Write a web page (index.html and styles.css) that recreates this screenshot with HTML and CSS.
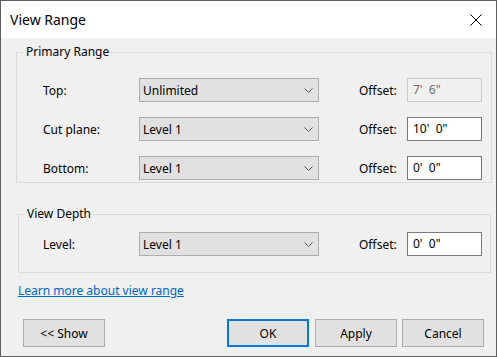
FILE: index.html
```html
<!DOCTYPE html>
<html lang="en">
<head>
  <meta charset="UTF-8">
  <title>View Range</title>
  <link rel="stylesheet" href="styles.css">
</head>
<body>

  <div class="window">
    <div class="titlebar">
      <span class="title">View Range</span>
      <svg class="close" width="12" height="12" viewBox="0 0 12 12">
        <path d="M0.5 0.5 L11.5 11.5 M11.5 0.5 L0.5 11.5" stroke="#000" stroke-width="1" fill="none"/>
      </svg>
    </div>

    <div class="content">
      <fieldset class="group primary">
        <legend>Primary Range</legend>

        <div class="row">
          <span class="field-label">Top:</span>
          <div class="combo"><span>Unlimited</span><svg class="chev" width="9" height="5" viewBox="0 0 9 5"><path d="M0.5 0.5 L4.5 4.5 L8.5 0.5" stroke="#555" fill="none"/></svg></div>
          <span class="offset-label">Offset:</span>
          <div class="offset disabled">7'  6"</div>
        </div>

        <div class="row">
          <span class="field-label">Cut plane:</span>
          <div class="combo"><span>Level 1</span><svg class="chev" width="9" height="5" viewBox="0 0 9 5"><path d="M0.5 0.5 L4.5 4.5 L8.5 0.5" stroke="#555" fill="none"/></svg></div>
          <span class="offset-label">Offset:</span>
          <div class="offset">10'  0"</div>
        </div>

        <div class="row">
          <span class="field-label">Bottom:</span>
          <div class="combo"><span>Level 1</span><svg class="chev" width="9" height="5" viewBox="0 0 9 5"><path d="M0.5 0.5 L4.5 4.5 L8.5 0.5" stroke="#555" fill="none"/></svg></div>
          <span class="offset-label">Offset:</span>
          <div class="offset">0'  0"</div>
        </div>
      </fieldset>

      <fieldset class="group depth">
        <legend>View Depth</legend>

        <div class="row">
          <span class="field-label">Level:</span>
          <div class="combo"><span>Level 1</span><svg class="chev" width="9" height="5" viewBox="0 0 9 5"><path d="M0.5 0.5 L4.5 4.5 L8.5 0.5" stroke="#555" fill="none"/></svg></div>
          <span class="offset-label">Offset:</span>
          <div class="offset">0'  0"</div>
        </div>
      </fieldset>

      <a class="learn" href="#">Learn more about view range</a>

      <div class="buttons">
        <button class="btn">&lt;&lt; Show</button>
        <div class="spacer"></div>
        <button class="btn default">OK</button>
        <button class="btn apply">Apply</button>
        <button class="btn">Cancel</button>
      </div>
    </div>
  </div>

</body>
</html>
```

FILE: styles.css
```css
html, body {
  margin: 0;
  padding: 0;
}
body {
  font-family: "Noto Sans", "Liberation Sans", sans-serif;
  font-size: 12px;
  color: #000;
  background: #f0f0f0;
}
.window {
  width: 497px;
  height: 357px;
  box-sizing: border-box;
  border: 1px solid #5f5f5f;
  background: #f0f0f0;
  display: flex;
  flex-direction: column;
}
.titlebar {
  height: 37px;
  background: #fff;
  display: flex;
  align-items: center;
  padding: 0 14px 0 9px;
}
.title {
  font-size: 14px;
  flex: 1;
}
.content {
  padding: 0 4px 0 15px;
}

/* group boxes */
.group {
  margin: 0;
  border: 1px solid #dcdcdc;
  min-width: 0;
}
.group legend {
  padding: 0 2px;
  line-height: 16px;
}
.primary {
  margin-top: 6px;
  padding: 18px 8px 2px 7px;
}
.depth {
  margin: 23px 1px 0 2px;
  padding: 10px 8px 16px 6px;
}
.primary .row {
  padding-left: 19px;
}
.depth .row {
  padding-left: 18px;
}
.row {
  display: flex;
  align-items: center;
  height: 24px;
  margin-bottom: 15px;
}
.row:last-child {
  margin-bottom: 0;
}
.field-label {
  width: 96px;
}
.combo {
  width: 180px;
  height: 24px;
  box-sizing: border-box;
  background: #e1e1e1;
  border: 1px solid #adadad;
  display: flex;
  align-items: center;
  padding: 0 5px 0 3px;
}
.combo span {
  flex: 1;
}
.offset-label {
  margin-left: 40px;
  width: 48px;
}
.offset {
  width: 75px;
  height: 24px;
  box-sizing: border-box;
  background: #fff;
  border: 1px solid #7a7a7a;
  padding-left: 5px;
  line-height: 21px;
  white-space: pre;
}
.offset.disabled {
  background: #f0f0f0;
  border-color: #cccccc;
  color: #6d6d6d;
}

.learn {
  display: block;
  margin: 10px 0 0 2px;
  line-height: 16px;
  color: #0066cc;
}

/* bottom buttons */
.buttons {
  display: flex;
  margin-top: 20px;
  padding: 0 8px 0 7px;
}
.spacer {
  flex: 1;
}
.btn {
  width: 82px;
  height: 28px;
  box-sizing: border-box;
  background: #e1e1e1;
  border: 1px solid #adadad;
  font-family: inherit;
  font-size: 12px;
  color: #000;
  padding: 0;
  margin-left: 5px;
}
.btn:first-child {
  margin-left: 0;
}
.btn.default {
  border: 2px solid #0078d7;
}
.btn.apply {
  margin-left: 6px;
}
```
